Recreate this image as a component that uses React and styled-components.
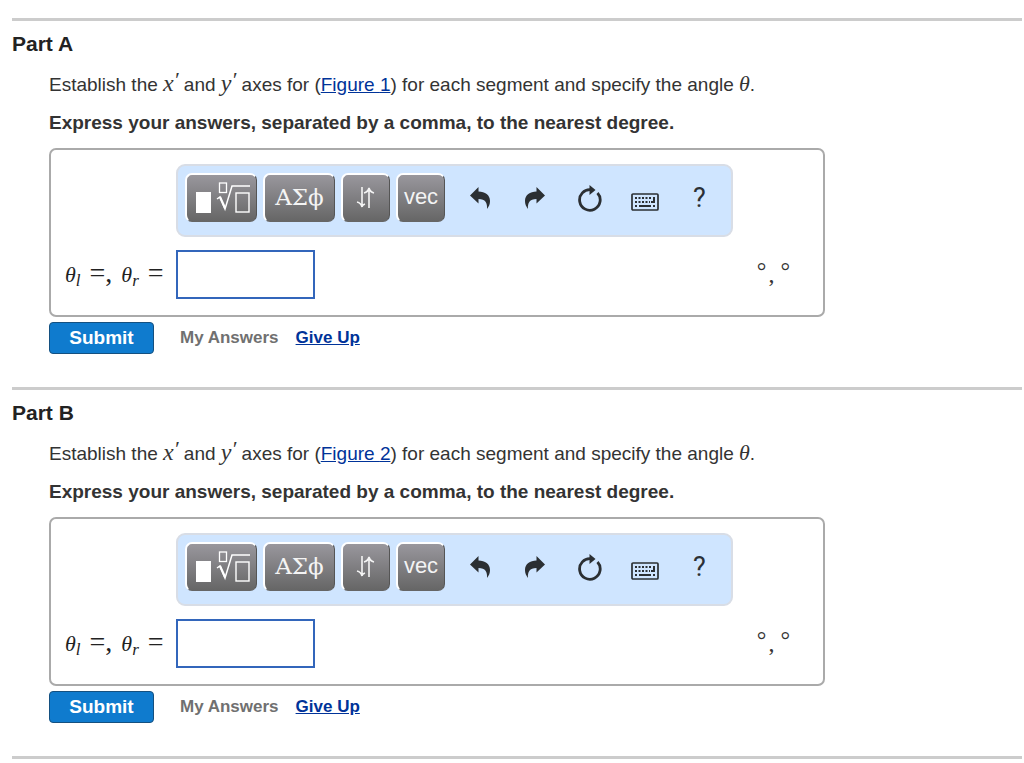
import React from 'react';
import styled, { createGlobalStyle } from 'styled-components';

const GlobalStyle = createGlobalStyle`
  * { box-sizing: border-box; }
  body {
    margin: 0;
    background: #fff;
    color: #333;
    font-family: "Liberation Sans", Arial, sans-serif;
    font-size: 19px;
    line-height: 24px;
  }
`;

const Page = styled.main`
  padding: 18px 2px 0 12px;
`;

const Part = styled.section`
  border-top: 3px solid #ccc;
  padding: 11px 0 33px;
`;

const EndRule = styled.hr`
  height: 3px;
  margin: 0;
  border: 0;
  background: #ccc;
`;

const Heading = styled.h2`
  margin: 0;
  color: #222;
  font-size: 21px;
  line-height: 24px;
`;

const Body = styled.form`
  margin: 0 0 0 37px;
`;

const Prompt = styled.p`
  margin: 17px 0 0;
`;

const Instruction = styled.p`
  margin: 14px 0 0;
  font-weight: 700;
`;

const MathText = styled.span`
  font-family: "Liberation Serif", "Times New Roman", serif;
  font-style: italic;
  font-size: 22px;
  line-height: 0;

  sub { font-size: 17px; line-height: 0; vertical-align: -4px; }
`;

const Primed = styled(MathText)`
  font-size: 24px;

  sup {
    font-size: 22px;
    line-height: 0;
    vertical-align: 4px;
  }
`;

const Relation = styled.span`
  font-family: "Liberation Serif", "Times New Roman", serif;
  font-size: 28px;
  line-height: 24px;
`;

const Link = styled.a`
  color: #039;
  text-decoration: underline;
  font-weight: ${({ $bold }) => ($bold ? 700 : 400)};
  font-size: ${({ $bold }) => ($bold ? '17px' : 'inherit')};
`;

const AnswerBox = styled.div`
  width: 776px;
  max-width: 100%;
  margin-top: 13px;
  padding: 14px 14px 16px;
  border: 2px solid #aaa;
  border-radius: 7px;
  display: grid;
  grid-template-columns: 111px auto 1fr;
  row-gap: 13px;
  align-items: center;
`;

const Toolbar = styled.div`
  grid-column: 2 / 4;
  justify-self: start;
  display: flex;
  align-items: center;
  height: 73px;
  padding: 0 4px 6px 7px;
  border: 2px solid #d8dde6;
  border-radius: 9px;
  background: #cfe5ff;
`;

const Key = styled.button`
  display: flex;
  align-items: center;
  justify-content: center;
  width: ${({ $wide }) => ($wide ? 72 : 49)}px;
  height: 49px;
  margin-right: 6px;
  padding: 0 0 2px;
  border: 2px solid #fff;
  border-right: 1px solid #555;
  border-bottom: 1px solid #666;
  border-radius: 7px;
  background: linear-gradient(#99979d, #666);
  color: #f4f4f4;
  font-family: ${({ $serif }) => ($serif ? '"DejaVu Serif", serif' : '"Liberation Sans", Arial, sans-serif')};
  font-size: ${({ $serif }) => ($serif ? 23 : 22)}px;
`;

const Tools = styled.div`
  display: flex;
  margin-left: 1px;
`;

const Tool = styled.button`
  display: flex;
  align-items: center;
  justify-content: center;
  width: 55px;
  height: 40px;
  padding: 0;
  border: 0;
  background: none;
  color: #2b3036;
  font-family: Roboto, sans-serif;
  font-size: 27px;
`;

const AnswerLabel = styled.label`
  display: flex;
  align-items: baseline;
  gap: 9px;
  padding-bottom: 4px;
  white-space: nowrap;
  color: #222;
`;

const AnswerInput = styled.input`
  width: 139px;
  height: 49px;
  padding: 0 8px;
  border: 2px solid #36b;
  background: #fff;
  font: inherit;
`;

const Units = styled.span`
  justify-self: end;
  display: flex;
  align-items: center;
  gap: 2px;
  padding: 0 19px 2px 0;
  font-family: "Liberation Serif", "Times New Roman", serif;
  font-size: 24px;
`;

const Degree = styled.span`
  padding-bottom: 6px;
`;

const Comma = styled.span`
  margin-right: 4px;
`;

const Actions = styled.div`
  display: flex;
  align-items: center;
  margin-top: 5px;
  font-size: 17px;
`;

const Submit = styled.button`
  width: 105px;
  height: 32px;
  padding: 0;
  border: 1px solid #145080;
  border-radius: 4px;
  background: #0f7bce;
  color: #fff;
  font-family: inherit;
  font-size: 19px;
  font-weight: 700;
`;

const MyAnswers = styled.span`
  margin: 0 17px 0 26px;
  color: #707070;
  font-weight: 700;
`;

const TemplatesIcon = () => (
  <svg width="58" height="34" viewBox="0 0 58 34" fill="none" stroke="#fff" aria-hidden="true">
    <rect x="3" y="12" width="15" height="21" fill="#fff" stroke="none" />
    <rect x="26.500" y="3" width="7" height="9.500" strokeWidth="1.300" />
    <path d="M24 19l3-2 5 12 7-23h18" strokeWidth="1.500" />
    <path d="M27 17l5 11" strokeWidth="2.200" />
    <rect x="43" y="13" width="13" height="19" strokeWidth="1.400" />
  </svg>
);

const ArrowsIcon = () => (
  <svg width="22" height="26" viewBox="0 0 22 26" fill="none" stroke="#f4f4f4" strokeWidth="1.600" aria-hidden="true">
    <path d="M7 3v20M2 18q4 1 5 5q0-2 3-3M14 24V4M9 9q4-1 5-5q1 4 5 5" />
  </svg>
);

const ArrowIcon = ({ forward }) => (
  <svg width="22" height="24" viewBox="0 0 22 24" fill="#2b2f33" aria-hidden="true">
    <path
      transform={forward ? 'translate(22 0) scale(-1 1)' : undefined}
      d="M1 9.500L9.500 1v4.500C16 5.500 21 9 21 15c0 3-1 5.500-3 8 .5-6-1.500-10-8.500-10v4.500z"
    />
  </svg>
);

const ResetIcon = () => (
  <svg width="26" height="28" viewBox="0 0 26 28" aria-hidden="true">
    <path d="M14 5.700A10.300 10.300 0 1 0 20.500 9" fill="none" stroke="#2b2f33" strokeWidth="2.800" />
    <path d="M12.500 1l6 5-6 5z" fill="#2b2f33" />
  </svg>
);

const KeyboardIcon = () => (
  <svg width="28" height="26" viewBox="0 -8 28 26" fill="none" stroke="#2b2f33" aria-hidden="true">
    <rect x="1" y="1" width="26" height="16" rx="1" strokeWidth="1.700" />
    <path d="M4 5h17" strokeWidth="2" strokeDasharray="2 1.500" />
    <path d="M4 9h15" strokeWidth="2" strokeDasharray="2 1.500" />
    <path d="M20 9h3V4" strokeWidth="2" />
    <path d="M4 13h2M8 13h12M22 13h2" strokeWidth="2" />
  </svg>
);

const AnswerPart = ({ letter, figure }) => (
  <Part>
    <Heading>Part {letter}</Heading>
    <Body onSubmit={(e) => e.preventDefault()}>
      <Prompt>
        Establish the <Primed>x<sup>′</sup></Primed> and <Primed>y<sup>′</sup></Primed> axes for (
        <Link href={`#figure-${figure}`}>Figure {figure}</Link>) for each segment and specify the angle{' '}
        <MathText>θ</MathText>.
      </Prompt>
      <Instruction>Express your answers, separated by a comma, to the nearest degree.</Instruction>
      <AnswerBox>
        <Toolbar>
          <Key type="button" $wide aria-label="Templates"><TemplatesIcon /></Key>
          <Key type="button" $wide $serif>ΑΣϕ</Key>
          <Key type="button" aria-label="Arrows"><ArrowsIcon /></Key>
          <Key type="button">vec</Key>
          <Tools>
            <Tool type="button" aria-label="Undo"><ArrowIcon /></Tool>
            <Tool type="button" aria-label="Redo"><ArrowIcon forward /></Tool>
            <Tool type="button" aria-label="Reset"><ResetIcon /></Tool>
            <Tool type="button" aria-label="Keyboard"><KeyboardIcon /></Tool>
            <Tool type="button">?</Tool>
          </Tools>
        </Toolbar>
        <AnswerLabel htmlFor={`answer-${letter}`}>
          <MathText>θ<sub>l</sub></MathText>
          <Relation>=,</Relation>
          <MathText>θ<sub>r</sub></MathText>
          <Relation>=</Relation>
        </AnswerLabel>
        <AnswerInput id={`answer-${letter}`} type="text" />
        <Units><Degree>°</Degree><Comma>,</Comma><Degree>°</Degree></Units>
      </AnswerBox>
      <Actions>
        <Submit type="submit">Submit</Submit>
        <MyAnswers>My Answers</MyAnswers>
        <Link $bold href="#give-up">Give Up</Link>
      </Actions>
    </Body>
  </Part>
);

export default function App() {
  return (
    <>
      <GlobalStyle />
      <Page>
        <AnswerPart letter="A" figure="1" />
        <AnswerPart letter="B" figure="2" />
        <EndRule />
      </Page>
    </>
  );
}
